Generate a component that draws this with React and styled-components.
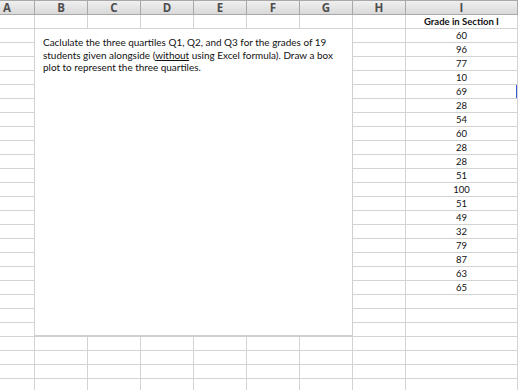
import React from "react";
import styled, { createGlobalStyle } from "styled-components";

const Global = createGlobalStyle`
  html, body { margin: 0; padding: 0; background: #fff; }
  body { width: 518px; height: 390px; overflow: hidden; font-family: Lato, "Open Sans", sans-serif; }
`;

const COLS = [35, 53, 53, 53, 53, 53, 53, 53];
const LETTERS = ["A", "B", "C", "D", "E", "F", "G", "H", "I"];
const GRADES = [60, 96, 77, 10, 69, 28, 54, 60, 28, 28, 51, 100, 51, 49, 32, 79, 87, 63, 65];
const ROWS = 27;

const Page = styled.div`
  width: 518px;
  height: 390px;
  overflow: hidden;
  display: flex;
  flex-direction: column;
`;

const TopStrip = styled.div`
  height: 3px;
  display: flex;
  border-bottom: 1px solid #a9a9a9;
  box-sizing: content-box;
`;

const StripGap = styled.div`
  width: ${(p) => p.$w}px;
  flex: ${(p) => (p.$grow ? 1 : "none")};
`;

const StripTab = styled.div`
  width: ${(p) => p.$w}px;
  background: #e4e4e4;
  border-right: 1px solid #bdbdbd;
  box-sizing: border-box;
`;

const Sheet = styled.div`
  display: grid;
  grid-template-columns: ${COLS.map((c) => c + "px").join(" ")} 1fr;
  grid-template-rows: 14px;
  grid-auto-rows: 14px;
`;

const Head = styled.div`
  box-sizing: border-box;
  border-right: 1px solid #a8a8a8;
  border-bottom: 1px solid #a8a8a8;
  background: linear-gradient(#f0f0f0, #d9d9d9);
  color: #4e4e4e;
  font-family: "Open Sans", sans-serif;
  font-weight: 700;
  font-size: 11.5px;
  line-height: 13px;
  text-align: ${(p) => (p.$left ? "left" : "center")};
  padding-left: ${(p) => (p.$left ? "3px" : "0")};
`;

const Cell = styled.div`
  box-sizing: border-box;
  border-right: 1px solid #d3d3d3;
  border-bottom: 1px solid #d3d3d3;
  font-family: Lato, "Open Sans", sans-serif;
  font-size: 9.5px;
  line-height: 13px;
  color: #111;
  text-align: center;
  font-weight: ${(p) => (p.$bold ? 700 : 400)};
  box-shadow: ${(p) => (p.$mark ? "inset -1px 0 0 #3b5bd6" : "none")};
  white-space: nowrap;
  overflow: hidden;
`;

const Box = styled.div`
  grid-column: 2 / 8;
  grid-row: 3 / 25;
  box-sizing: border-box;
  background: #fff;
  border-right: 1px solid #d0d0d0;
  border-bottom: 2px solid #d0d0d0;
  padding: 7px 6px 0 8px;
  font-family: Lato, "Open Sans", sans-serif;
  font-size: 9.95px;
  line-height: 12.7px;
  color: #111;
`;

const U = styled.span`
  text-decoration: underline;
`;

export default function App() {
  const cells = [];
  for (let r = 1; r <= ROWS; r++) {
    for (let c = 0; c < 9; c++) {
      const inBox = c >= 1 && c <= 6 && r >= 2 && r <= 23;
      if (inBox) {
        if (c === 1 && r === 2) {
          cells.push(
            <Box key="box">
              Caclulate the three quartiles Q1, Q2, and Q3 for the grades of 19 students given alongside (
              <U>without</U> using Excel formula). Draw a box plot to represent the three quartiles.
            </Box>
          );
        }
        continue;
      }
      let content = null;
      if (c === 8 && r === 1) content = "Grade in Section I";
      else if (c === 8 && r >= 2 && r - 2 < GRADES.length) content = GRADES[r - 2];
      cells.push(
        <Cell key={r + "-" + c} $bold={c === 8 && r === 1} $mark={c === 8 && r === 6}>
          {content}
        </Cell>
      );
    }
  }
  return (
    <Page>
      <Global />
      <TopStrip>
        <StripGap $w={68} />
        <StripTab $w={18} />
        <StripTab $w={65} />
        <StripTab $w={35} />
        <StripGap $grow />
      </TopStrip>
      <Sheet>
        {LETTERS.map((l, i) => (
          <Head key={l} $left={i === 0}>
            {l}
          </Head>
        ))}
        {cells}
      </Sheet>
    </Page>
  );
}
